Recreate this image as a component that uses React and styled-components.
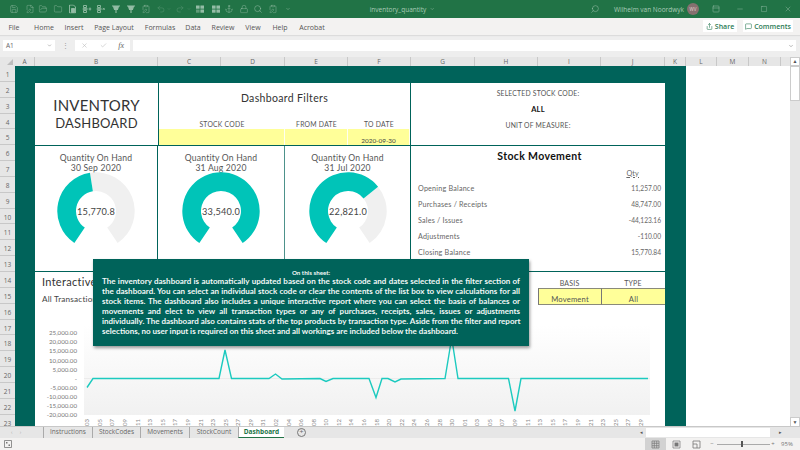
import styled, { createGlobalStyle } from "styled-components";
import {
  Anchor,
  Check,
  ChevronDown,
  ClipboardPen,
  FilePen,
  Folder,
  FolderOpen,
  Lock,
  MessageSquare,
  Minus,
  PanelTop,
  Redo2,
  Save,
  Search,
  Share,
  Square,
  Undo2,
  X,
} from "lucide-react";

const TEAL = "#00635a";
const AQUA = "#00c4b8";
const GOTHIC = `"Lato", "Open Sans", sans-serif`;
const UI = `"Open Sans", "Noto Sans", sans-serif`;

const COLUMNS = [
  ["A", 20], ["B", 123], ["C", 63], ["D", 64], ["E", 63], ["F", 63], ["G", 64],
  ["H", 63], ["I", 63], ["J", 64], ["K", 21], ["L", 31], ["M", 32], ["N", 32],
];
const MENU = [
  ["File", 14], ["Home", 44], ["Insert", 74], ["Page Layout", 114], ["Formulas", 160],
  ["Data", 193], ["Review", 223], ["View", 253], ["Help", 280], ["Acrobat", 312],
];
const MOVEMENT = [
  ["Opening Balance", "11,257.00"],
  ["Purchases / Receipts", "48,747.00"],
  ["Sales / Issues", "-44,123.16"],
  ["Adjustments", "-110.00"],
  ["Closing Balance", "15,770.84"],
];
const NOTE_LINES = [
  "The inventory dashboard is automatically updated based on the stock code and dates selected in the filter section of",
  "the dashboard. You can select an individual stock code or clear the contents of the list box to view calculations for all",
  "stock items. The dashboard also includes a unique interactive report where you can select the basis of balances or",
  "movements and elect to view all transaction types or any of purchases, receipts, sales, issues or adjustments",
  "individually. The dashboard also contains stats of the top products by transaction type. Aside from the filter and report",
];
const Y_LABELS = [
  "25,000.00", "20,000.00", "15,000.00", "10,000.00", "5,000.00", "-",
  "-5,000.00", "-10,000.00", "-15,000.00", "-20,000.00",
];
const X_LABELS = "03 05 07 09 11 13 15 17 19 21 23 25 27 29 31 02 04 06 08 10 12 14 16 18 20 22 24 26 28 30 01 03 05 07 09 11 13 15 17 19 21 23 25 27 29".split(" ");
const LINE = "87,387.5 93,378.5 219,378.5 225,350 231.5,378.5 269,378.5 275.5,374 282,379 320,378.5 326,381.5 333,378.5 369,378.5 376,397.5 382,378.5 388,378.5 395,382 401,379 445,378.5 451.7,338 458,378.5 508.5,378.5 515,411 521,378.5 648,378.5";

const GlobalStyle = createGlobalStyle`
  html, body { margin: 0; padding: 0; overflow: hidden; background: #fff; }
  * { box-sizing: border-box; }
`;

const Window = styled.div`
  width: 800px;
  height: 450px;
  display: flex;
  flex-direction: column;
  overflow: hidden;
  font-family: ${UI};
`;

const TitleBar = styled.header`
  position: relative;
  height: 18px;
  flex: none;
  background: #217346;
  color: #a9cbb7;
  font-size: 6.5px;
`;

const Floating = styled.span`
  position: absolute;
  top: 50%;
  left: ${(p) => p.$x}px;
  transform: translate(-50%, -50%);
  display: flex;
  align-items: center;
  white-space: nowrap;
  gap: 3px;
  opacity: ${(p) => p.$dim || 1};
`;

const Avatar = styled.span`
  width: 12px;
  height: 12px;
  border-radius: 50%;
  background: #85706f;
  color: #e8dcdc;
  font-size: 4.5px;
  display: flex;
  align-items: center;
  justify-content: center;
`;

const MenuBar = styled.nav`
  position: relative;
  height: 17px;
  flex: none;
  background: #f3f2f1;
  color: #555;
  font-size: 7px;
  box-shadow: 0 1px 1px #dcdcdc;
  z-index: 1;
`;

const GreenButton = styled.span`
  position: absolute;
  top: 2px;
  right: ${(p) => p.$right}px;
  width: ${(p) => p.$width}px;
  height: 12px;
  background: #fff;
  color: #2a7a54;
  font-weight: 600;
  font-size: 7px;
  display: flex;
  align-items: center;
  justify-content: center;
  gap: 2px;
`;

const FormulaBar = styled.div`
  height: 22px;
  flex: none;
  background: #eeeeee;
  padding: 5px 4px 6px 3px;
  display: flex;
  align-items: stretch;
  gap: 3px;
  color: #666;
  font-size: 6.5px;
`;

const NameBox = styled.div`
  width: 52px;
  background: #fff;
  display: flex;
  align-items: center;
  justify-content: space-between;
  padding: 0 3px;
`;

const Grip = styled.span`
  width: 14px;
  text-align: center;
  color: #999;
  line-height: 11px;
`;

const FunctionBox = styled.div`
  width: 55px;
  background: #fff;
  display: flex;
  align-items: center;
  justify-content: space-around;
  color: #bbb;
  font-family: "Liberation Serif", serif;
  font-style: italic;
  font-size: 8px;
  b { color: #666; font-weight: 400; }
`;

const FormulaInput = styled.div`
  flex: 1;
  background: #fff;
  display: flex;
  align-items: center;
  justify-content: flex-end;
  padding-right: 2px;
  color: #777;
`;

const ColumnHeader = styled.div`
  height: 9px;
  flex: none;
  display: flex;
  background: #e6e6e6;
  color: #666;
  font-size: 6.5px;
  line-height: 9px;
`;

const Corner = styled.div`
  width: 15px;
  flex: none;
  position: relative;
  &::after {
    content: "";
    position: absolute;
    right: 2px;
    bottom: 1px;
    border-style: solid;
    border-width: 0 0 6px 6px;
    border-color: transparent transparent #bdbdbd transparent;
  }
`;

const ColumnCell = styled.div`
  width: ${(p) => p.$width}px;
  flex: none;
  text-align: center;
  border-right: 1px solid #c8c8c8;
`;

const ScrollCap = styled.div`
  margin-left: auto;
  width: 10px;
  background: #fff;
  border: 1px solid #ccc;
  text-align: center;
  font-size: 5px;
  line-height: 7px;
  color: #555;
`;

const SheetArea = styled.div`
  flex: 1;
  min-height: 0;
  display: flex;
  overflow: hidden;
`;

const RowHeader = styled.div`
  width: 15px;
  flex: none;
  background: #e6e6e6;
  overflow: hidden;
`;

const RowCell = styled.div`
  height: 15.85px;
  border-bottom: 1px solid #c8c8c8;
  color: #666;
  font-size: 6.5px;
  text-align: center;
  line-height: 18px;
`;

const Canvas = styled.main`
  position: relative;
  width: 671px;
  flex: none;
  background: ${TEAL};
  padding: 17px 21px 0 20px;
`;

const Panel = styled.div`
  height: 100%;
  background: #fff;
  display: flex;
  flex-direction: column;
  font-family: ${GOTHIC};
  color: #444;
`;

const TopRow = styled.section`
  height: 63px;
  flex: none;
  display: flex;
  border-bottom: 1px solid ${TEAL};
`;

const TitleCell = styled.div`
  width: 123px;
  flex: none;
  display: flex;
  flex-direction: column;
  align-items: center;
  justify-content: center;
  color: #333;
  font-size: 15px;
  line-height: 18px;
  letter-spacing: 0.2px;
  small { font-size: 13px; letter-spacing: 0.2px; }
`;

const FilterCell = styled.div`
  width: 253px;
  flex: none;
  display: flex;
  flex-direction: column;
  border-left: 1px solid ${TEAL};
  border-right: 1px solid ${TEAL};
`;

const FilterTitle = styled.div`
  font-size: 10.5px;
  letter-spacing: 0.35px;
  color: #333;
  text-align: center;
  line-height: 14px;
  margin-top: 8px;
`;

const FilterGrid = styled.div`
  margin-top: auto;
  display: grid;
  grid-template-columns: 126px 63px 1fr;
  grid-template-rows: 15px 16px;
  font-size: 6.8px;
  letter-spacing: 0.25px;
  text-align: center;
  color: #555;
`;

const FilterLabel = styled.span`
  align-self: end;
  line-height: 9px;
`;

const FilterValue = styled.span`
  background: #ffff99;
  border-right: 1px solid #fffff0;
  color: #444;
  font-size: 6.4px;
  line-height: 23px;
  letter-spacing: 0;
  overflow: hidden;
`;

const SelectedCell = styled.div`
  flex: 1;
  display: flex;
  flex-direction: column;
  align-items: center;
  padding-top: 3px;
  font-size: 6.8px;
  letter-spacing: 0.2px;
  line-height: 15.85px;
  color: #555;
  b { color: #111; font-size: 7.5px; }
`;

const MiddleRow = styled.section`
  height: 126px;
  flex: none;
  display: flex;
  border-bottom: 1px solid ${TEAL};
`;

const GaugeCell = styled.div`
  width: ${(p) => p.$width}px;
  flex: none;
  display: flex;
  flex-direction: column;
  align-items: center;
  padding-top: 6.5px;
  border-right: 1px solid ${(p) => p.$border};
  font-size: 8.6px;
  letter-spacing: 0.2px;
  line-height: 10px;
  color: #555;
`;

const GaugeSvg = styled.svg`
  display: block;
  margin-top: -2px;
`;

const MovementCell = styled.div`
  flex: 1;
  padding: 3px 4px 0 7px;
  font-size: 7.2px;
  letter-spacing: 0.2px;
  color: #666;
`;

const MovementTitle = styled.div`
  color: #111;
  font-size: 10.5px;
  font-weight: 700;
  letter-spacing: 0.35px;
  line-height: 15px;
  text-align: center;
  margin-bottom: 1.5px;
`;

const MovementRow = styled.div`
  height: 15.85px;
  line-height: 15.85px;
  display: flex;
  justify-content: space-between;
`;

const QtyValue = styled.span`
  font-size: 6.6px;
  letter-spacing: 0;
`;

const QtyHead = styled.span`
  margin-left: auto;
  margin-right: 22px;
  text-decoration: underline;
`;

const ReportRow = styled.section`
  flex: 1;
  min-height: 0;
  display: flex;
  flex-direction: column;
  overflow: hidden;
`;

const ReportHead = styled.div`
  height: 53px;
  flex: none;
  display: flex;
  justify-content: space-between;
  padding: 2px 0 0 7px;
`;

const ReportTitle = styled.div`
  color: #333;
  font-size: 11px;
  letter-spacing: 0.3px;
  line-height: 15px;
  small {
    display: block;
    margin-top: 3px;
    font-size: 8.2px;
    letter-spacing: 0.2px;
    color: #444;
  }
`;

const SelectorGrid = styled.div`
  width: 127px;
  display: grid;
  grid-template-columns: 63px 1fr;
  grid-template-rows: 14px 17px;
  font-size: 7px;
  letter-spacing: 0.2px;
  text-align: center;
  color: #555;
`;

const SelectorLabel = styled.span`
  align-self: end;
  line-height: 10px;
`;

const SelectorValue = styled.span`
  background: #ffff99;
  border-top: 1px solid #8a8a7a;
  border-bottom: 1px solid #8a8a7a;
  border-left: 1px solid #777;
  font-size: 7.6px;
  line-height: 20px;
  overflow: hidden;
`;

const ChartSvg = styled.svg`
  display: block;
  flex: none;
`;

const Note = styled.aside`
  position: absolute;
  left: 78px;
  top: 193px;
  width: 436px;
  height: 87px;
  padding: 9px 9px 0;
  background: ${TEAL};
  box-shadow: 1px 2px 3px rgba(0, 0, 0, 0.4);
  color: #f2f8f7;
  font-family: ${GOTHIC};
  font-size: 8px;
  font-weight: 700;
  line-height: 9.9px;
`;

const NoteHead = styled.div`
  text-align: center;
  font-size: 6.2px;
  line-height: 9px;
`;

const NoteLine = styled.div`
  white-space: nowrap;
  text-align: justify;
  text-align-last: ${(p) => (p.$last ? "left" : "justify")};
`;

const SidePane = styled.div`
  flex: 1;
  background: #fff;
`;

const VerticalScroll = styled.div`
  width: 10px;
  flex: none;
  background: #e6e6e6;
  display: flex;
  flex-direction: column;
  color: #555;
  font-size: 5px;
  text-align: center;
`;

const ScrollThumb = styled.div`
  height: 35px;
  background: #fff;
  border: 1px solid #ccc;
`;

const ScrollArrow = styled.div`
  margin-top: auto;
  height: 10px;
  background: #fff;
  border: 1px solid #ccc;
  line-height: 8px;
`;

const TabBar = styled.div`
  position: relative;
  height: 11px;
  flex: none;
  background: #e6e6e6;
  color: #666;
  font-size: 6.5px;
  display: flex;
  align-items: stretch;
  padding-left: 43px;
  box-shadow: 0 -1px 0 #c8c8c8;
  z-index: 1;
`;

const NavArrows = styled.span`
  position: absolute;
  left: 11px;
  top: 0;
  color: #aaa;
  font-size: 5px;
  line-height: 11px;
  word-spacing: 6px;
`;

const Tab = styled.span`
  width: ${(p) => p.$width}px;
  flex: none;
  text-align: center;
  line-height: 10px;
  border-left: 1px solid #aaa;
  background: ${(p) => (p.$active ? "#fff" : "transparent")};
  color: ${(p) => (p.$active ? "#217346" : "#666")};
  font-weight: ${(p) => (p.$active ? 700 : 400)};
  border-bottom: ${(p) => (p.$active ? "1px solid #217346" : "0")};
`;

const AddTab = styled.span`
  width: 9px;
  height: 9px;
  margin: 1px 0 0 13px;
  border: 1px solid #777;
  border-radius: 50%;
  font-size: 7px;
  line-height: 6px;
  text-align: center;
`;

const HorizontalScroll = styled.div`
  position: absolute;
  left: 637px;
  right: 10px;
  top: 1px;
  bottom: 1px;
  display: flex;
  align-items: stretch;
  color: #555;
  font-size: 5px;
  line-height: 9px;
  text-align: center;
`;

const HArrow = styled.span`
  width: 9px;
  flex: none;
`;

const HThumb = styled.span`
  width: 124px;
  flex: none;
  background: #fff;
  margin-right: 6px;
`;

const StatusBar = styled.footer`
  position: relative;
  height: 12px;
  flex: none;
  background: #f3f2f1;
  box-shadow: 0 -1px 0 #dcdcdc;
  color: #777;
  font-size: 6px;
`;

const ViewButton = styled.span`
  position: absolute;
  top: 0;
  bottom: 0;
  left: ${(p) => p.$x}px;
  width: 21px;
  display: flex;
  align-items: center;
  justify-content: center;
  background: ${(p) => (p.$active ? "#d2d2d2" : "transparent")};
`;

const ZoomTrack = styled.span`
  position: absolute;
  left: 717px;
  width: 53px;
  top: 6px;
  height: 1px;
  background: #aaa;
  &::after {
    content: "";
    position: absolute;
    left: 24px;
    top: -3px;
    width: 2px;
    height: 6px;
    background: #555;
  }
`;

// small ribbon glyphs lucide doesn't have
const Glyph = ({ children }) => (
  <svg width="9" height="9" viewBox="0 0 9 9" fill="none" stroke="currentColor" strokeWidth="0.9">
    {children}
  </svg>
);
const PreviewIcon = () => (
  <Glyph>
    <path d="M1 .5h4l2 2V8.5H1z" />
    <path d="M3 4h3v4H3z" fill="currentColor" />
  </Glyph>
);
const InsertIcon = () => (
  <Glyph>
    <path d="M1 1h3v2H1zM1 6h3v2H1z" />
    <path d="M0 4.5h5" strokeWidth="1.4" />
    <path d="M6 4.5h3M7.5 3v3" />
  </Glyph>
);
const DeleteIcon = () => (
  <Glyph>
    <path d="M1 1h3v2H1zM1 6h3v2H1z" />
    <path d="M0 4.5h5" strokeWidth="1.4" />
    <path d="M6.2 3.4l2 2M8.2 3.4l-2 2" />
  </Glyph>
);
const PinIcon = () => (
  <Glyph>
    <path d="M.5 1.5h8M2 1.5l1 3.5h3l1-3.5M4.5 5v3.5" strokeWidth="1.1" />
    <path d="M2.5 2h4L6 4.5H3z" fill="currentColor" />
  </Glyph>
);
const GridIcon = ({ dense }) => (
  <Glyph>
    <g fill="currentColor" stroke="none">
      <rect x="0.5" y="1" width="3.6" height="3.2" />
      <rect x="4.9" y="1" width="3.6" height="3.2" />
      <rect x="0.5" y="5" width="3.6" height="3.2" opacity={dense ? 1 : 0.55} />
      <rect x="4.9" y="5" width="3.6" height="3.2" />
    </g>
  </Glyph>
);
const SheetGridIcon = () => (
  <Glyph>
    <path d="M1 1h7v7H1zM1 3.3h7M1 5.7h7M3.3 1v7M5.7 1v7" strokeWidth="0.7" />
  </Glyph>
);
const PageIcon = () => (
  <Glyph>
    <path d="M1 1h7v7H1z" strokeWidth="0.7" />
    <path d="M2.5 2.5h4v4h-4z" fill="currentColor" strokeWidth="0" />
  </Glyph>
);
const BreakIcon = () => (
  <Glyph>
    <path d="M1 1h7v7H1zM1 4h4v4" strokeWidth="0.8" />
  </Glyph>
);
const MacroIcon = () => (
  <Glyph>
    <path d="M1 1h7v7H1z" strokeWidth="0.8" />
    <path d="M2.5 2.5h1.5V4H2.5zM5 5h1.5v1.5H5z" fill="currentColor" strokeWidth="0" />
  </Glyph>
);

const QAT = [
  [<Save size={9} strokeWidth={1.2} />, 14],
  [<FilePen size={9} strokeWidth={1.2} />, 30],
  [<FolderOpen size={9} strokeWidth={1.2} />, 43],
  [<Folder size={9} strokeWidth={1.2} />, 58],
  [<PreviewIcon />, 73],
  [<InsertIcon />, 87],
  [<DeleteIcon />, 101],
  [<PinIcon />, 116],
  [<PinIcon />, 131],
  [<ClipboardPen size={9} strokeWidth={1.2} />, 146],
  [<GridIcon />, 200],
  [<GridIcon dense />, 216],
  [<Anchor size={9} strokeWidth={1.2} />, 229],
  [<Lock size={9} strokeWidth={1.2} />, 244],
  [<Search size={9} strokeWidth={1.4} />, 258],
  [<ClipboardPen size={9} strokeWidth={1.2} />, 273],
];

function polar(cx, cy, r, deg) {
  const a = (deg * Math.PI) / 180;
  return [cx + r * Math.sin(a), cy - r * Math.cos(a)];
}

function arc(cx, cy, from, to) {
  const outer = 38.7;
  const inner = 20;
  const large = to - from > 180 ? 1 : 0;
  const [a, b] = polar(cx, cy, outer, from);
  const [c, d] = polar(cx, cy, outer, to);
  const [e, f] = polar(cx, cy, inner, to);
  const [g, h] = polar(cx, cy, inner, from);
  return `M${a} ${b}A${outer} ${outer} 0 ${large} 1 ${c} ${d}L${e} ${f}A${inner} ${inner} 0 ${large} 0 ${g} ${h}Z`;
}

const Gauge = ({ width, border, date, end, value }) => (
  <GaugeCell $width={width} $border={border}>
    <span>Quantity On Hand</span>
    <span>{date}</span>
    <GaugeSvg width="80" height="80" viewBox="0 0 80 80">
      <path d={arc(40, 40, end, 146)} fill="#f0f0f0" />
      <path d={arc(40, 40, -146, end)} fill={AQUA} />
      <text x="40" y="43.5" textAnchor="middle" fontSize="9.2" letterSpacing="0.2" fill="#444" fontFamily="Lato, sans-serif">
        {value}
      </text>
    </GaugeSvg>
  </GaugeCell>
);

const Chart = () => (
  <ChartSvg width="630" height="102" viewBox="35 325 630 102">
    <defs>
      <linearGradient id="plot" x1="0" y1="0" x2="0" y2="1">
        <stop offset="0" stopColor="#ffffff" />
        <stop offset="1" stopColor="#f1f1f1" />
      </linearGradient>
    </defs>
    <rect x="84" y="325" width="566" height="90" fill="url(#plot)" />
    <line x1="84" x2="650" y1="378.5" y2="378.5" stroke="#e4e4e4" strokeWidth="0.6" />
    {Y_LABELS.map((label, i) => (
      <text key={i} x="77" y={335.2 + i * 9.14} textAnchor="end" fontSize="6.2" fill="#777" fontFamily="Lato, sans-serif">
        {label}
      </text>
    ))}
    {X_LABELS.map((label, i) => (
      <text key={i} transform={`translate(${89.3 + i * 12.58} 426) rotate(-90)`} fontSize="6" fill="#8a8a8a" fontFamily="Lato, sans-serif">
        {label}
      </text>
    ))}
    <polyline points={LINE} fill="none" stroke="#1ccabf" strokeWidth="1.4" />
  </ChartSvg>
);

export default function App() {
  const rows = Array.from({ length: 23 }, (_, i) => i + 1);
  return (
    <Window>
      <GlobalStyle />
      <TitleBar>
        {QAT.map(([icon, x]) => (
          <Floating key={x} $x={x} $dim={0.85}>{icon}</Floating>
        ))}
        <Floating $x={161} $dim={0.45}><Undo2 size={9} strokeWidth={1.2} /></Floating>
        <Floating $x={169} $dim={0.45}><ChevronDown size={4} /></Floating>
        <Floating $x={180} $dim={0.45}><Redo2 size={9} strokeWidth={1.2} /></Floating>
        <Floating $x={189} $dim={0.45}><ChevronDown size={4} /></Floating>
        <Floating $x={288}><ChevronDown size={5} /></Floating>
        <Floating $x={402}>inventory_quantity <ChevronDown size={5} /></Floating>
        <Floating $x={595}><Search size={9} strokeWidth={1.2} style={{ transform: "scaleX(-1)" }} /></Floating>
        <Floating $x={649}>Wilhelm van Noordwyk</Floating>
        <Floating $x={693}><Avatar>WV</Avatar></Floating>
        <Floating $x={716}><PanelTop size={8} strokeWidth={1.3} /></Floating>
        <Floating $x={740}><Minus size={8} strokeWidth={1.2} /></Floating>
        <Floating $x={764}><Square size={7} strokeWidth={1.4} /></Floating>
        <Floating $x={788}><X size={8} strokeWidth={1.2} /></Floating>
      </TitleBar>
      <MenuBar>
        {MENU.map(([label, x]) => (
          <Floating key={label} $x={x}>{label}</Floating>
        ))}
        <GreenButton $right={63} $width={34}><Share size={7} />Share</GreenButton>
        <GreenButton $right={7} $width={50}><MessageSquare size={7} />Comments</GreenButton>
      </MenuBar>
      <FormulaBar>
        <NameBox>A1<ChevronDown size={5} /></NameBox>
        <Grip>⋮</Grip>
        <FunctionBox>
          <X size={7} />
          <Check size={7} />
          <b>fx</b>
        </FunctionBox>
        <FormulaInput><ChevronDown size={6} /></FormulaInput>
      </FormulaBar>
      <ColumnHeader>
        <Corner />
        {COLUMNS.map(([label, width]) => (
          <ColumnCell key={label} $width={width}>{label}</ColumnCell>
        ))}
        <ScrollCap>▲</ScrollCap>
      </ColumnHeader>
      <SheetArea>
        <RowHeader>
          {rows.map((n) => (
            <RowCell key={n}>{n}</RowCell>
          ))}
        </RowHeader>
        <Canvas>
          <Panel>
            <TopRow>
              <TitleCell>
                <span>INVENTORY</span>
                <small>DASHBOARD</small>
              </TitleCell>
              <FilterCell>
                <FilterTitle>Dashboard Filters</FilterTitle>
                <FilterGrid>
                  <FilterLabel>STOCK CODE</FilterLabel>
                  <FilterLabel>FROM DATE</FilterLabel>
                  <FilterLabel>TO DATE</FilterLabel>
                  <FilterValue />
                  <FilterValue />
                  <FilterValue>2020-09-30</FilterValue>
                </FilterGrid>
              </FilterCell>
              <SelectedCell>
                <span>SELECTED STOCK CODE:</span>
                <b>ALL</b>
                <span>UNIT OF MEASURE:</span>
              </SelectedCell>
            </TopRow>
            <MiddleRow>
              <Gauge width={123} border={TEAL} date="30 Sep 2020" end={-9} value="15,770.8" />
              <Gauge width={127} border="#4d928b" date="31 Aug 2020" end={146} value="33,540.0" />
              <Gauge width={126} border={TEAL} date="31 Jul 2020" end={51} value="22,821.0" />
              <MovementCell>
                <MovementTitle>Stock Movement</MovementTitle>
                <MovementRow><QtyHead>Qty</QtyHead></MovementRow>
                {MOVEMENT.map(([label, qty]) => (
                  <MovementRow key={label}>
                    <span>{label}</span>
                    <QtyValue>{qty}</QtyValue>
                  </MovementRow>
                ))}
              </MovementCell>
            </MiddleRow>
            <ReportRow>
              <ReportHead>
                <ReportTitle>
                  Interactive Report
                  <small>All Transactions</small>
                </ReportTitle>
                <SelectorGrid>
                  <SelectorLabel>BASIS</SelectorLabel>
                  <SelectorLabel>TYPE</SelectorLabel>
                  <SelectorValue>Movement</SelectorValue>
                  <SelectorValue>All</SelectorValue>
                </SelectorGrid>
              </ReportHead>
              <Chart />
            </ReportRow>
          </Panel>
          <Note>
            <NoteHead>On this sheet:</NoteHead>
            {NOTE_LINES.map((line) => (
              <NoteLine key={line}>{line}</NoteLine>
            ))}
            <NoteLine $last>selections, no user input is required on this sheet and all workings are included below the dashboard.</NoteLine>
          </Note>
        </Canvas>
        <SidePane />
        <VerticalScroll>
          <ScrollThumb />
          <ScrollArrow>▼</ScrollArrow>
        </VerticalScroll>
      </SheetArea>
      <TabBar>
        <NavArrows>‹ ›</NavArrows>
        <Tab $width={49}>Instructions</Tab>
        <Tab $width={48}>StockCodes</Tab>
        <Tab $width={49}>Movements</Tab>
        <Tab $width={49}>StockCount</Tab>
        <Tab $width={46} $active>Dashboard</Tab>
        <AddTab>+</AddTab>
        <HorizontalScroll>
          <HArrow>◂</HArrow>
          <HThumb />
          <HArrow>▸</HArrow>
        </HorizontalScroll>
      </TabBar>
      <StatusBar>
        <Floating $x={8}><MacroIcon /></Floating>
        <ViewButton $x={645} $active><SheetGridIcon /></ViewButton>
        <ViewButton $x={666}><PageIcon /></ViewButton>
        <ViewButton $x={686}><BreakIcon /></ViewButton>
        <Floating $x={712}>−</Floating>
        <ZoomTrack />
        <Floating $x={773}>+</Floating>
        <Floating $x={787}>95%</Floating>
      </StatusBar>
    </Window>
  );
}
